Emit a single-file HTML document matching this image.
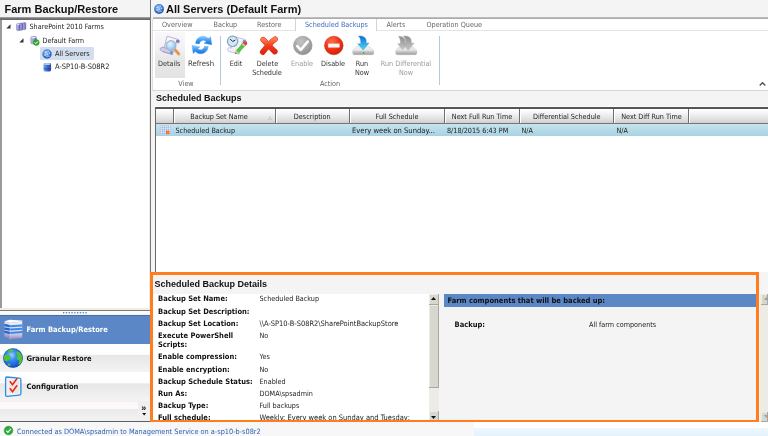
<!DOCTYPE html>
<html><head><meta charset="utf-8"><title>Farm Backup/Restore</title>
<style>
html,body{margin:0;padding:0;}
body{width:768px;height:436px;overflow:hidden;background:#f4f4f4;position:relative;font-family:"DejaVu Sans Condensed","Liberation Sans",sans-serif;font-size:7.2px;color:#222;}
.a{position:absolute;white-space:nowrap;}
.t{position:absolute;white-space:nowrap;line-height:10px;height:10px;margin-top:.8px;}
.c{text-align:center;}
.b{font-weight:bold;font-size:7.5px;color:#111;}
.h1{font-family:"Liberation Sans",sans-serif;position:absolute;white-space:nowrap;font-weight:bold;font-size:11px;line-height:14px;color:#111;}
.h2{font-family:"Liberation Sans",sans-serif;position:absolute;white-space:nowrap;font-weight:bold;font-size:9px;line-height:12px;color:#111;}
svg{position:absolute;overflow:visible;}
.sbt{background:#ecebe6;}
.sbb{background:#d7d6cf;box-shadow:inset -1px -1px 0 #a8a8a0,inset 1px 1px 0 #ecebe4;}
.vl{top:109px;width:1px;height:14px;background:#6e6e6e;box-shadow:1px 0 0 #fff;}
</style></head><body>
<div id="app" style="position:absolute;left:0;top:0;width:768px;height:436px;will-change:transform;">

<!-- LEFT PANE -->
<div class="h1" style="left:4.500px;top:2px;">Farm Backup/Restore</div>
<div class="a" style="left:0;top:17.400px;width:150px;height:2.400px;background:linear-gradient(#b0b0b0,#6f6f6f 55%,#686868);"></div>
<div class="a" style="left:0;top:20px;width:150px;height:288px;background:#fff;border-left:2px solid #9a9a9a;border-right:1.500px solid #efede6;box-sizing:border-box;"></div>
<div class="a" style="left:0;top:308px;width:150px;height:2px;background:#efede6;"></div>
<div class="a" style="left:0;top:310px;width:150px;height:1.300px;background:#7c7c7c;"></div>
<div class="a" style="left:149.600px;top:0;width:1.400px;height:422px;background:#787878;"></div>

<!-- tree -->
<svg style="left:6px;top:24px" width="5" height="5" viewBox="0 0 5 5"><path d="M4.5 0.3V4.5H0.3Z" fill="#333"/></svg>
<svg style="left:16px;top:22px" width="11" height="9" viewBox="0 0 11 9">
 <defs><linearGradient id="cy" x1="0" x2="1"><stop offset="0" stop-color="#c9c9ee"/><stop offset=".5" stop-color="#9a9ad6"/><stop offset="1" stop-color="#5a5aa8"/></linearGradient></defs>
 <rect x="6.6" y="0.6" width="3.2" height="7" rx="1.2" fill="url(#cy)" stroke="#5c5ca6" stroke-width=".5"/>
 <rect x="3.6" y="1" width="3.2" height="7.2" rx="1.2" fill="url(#cy)" stroke="#5c5ca6" stroke-width=".5"/>
 <rect x="0.6" y="1.4" width="3.4" height="7.2" rx="1.2" fill="url(#cy)" stroke="#5c5ca6" stroke-width=".5"/>
 <ellipse cx="2.3" cy="2.2" rx="1.5" ry=".7" fill="#e6e6fa"/>
</svg>
<div class="t" style="left:29.5px;top:21.5px;">SharePoint 2010 Farms</div>

<svg style="left:19px;top:37.5px" width="5" height="5" viewBox="0 0 5 5"><path d="M4.5 0.3V4.5H0.3Z" fill="#333"/></svg>
<svg style="left:30px;top:35.5px" width="10" height="10" viewBox="0 0 10 10">
 <rect x="0.8" y="0.6" width="5.6" height="7.2" rx="1.3" fill="url(#cy)" stroke="#6a6aa8" stroke-width=".5"/>
 <ellipse cx="3.6" cy="1.6" rx="2.4" ry=".8" fill="#e6e6fa"/>
 <circle cx="6.3" cy="6.5" r="2.9" fill="#2fae2f" stroke="#1d8a1d" stroke-width=".5"/>
 <path d="M4.8 6.5l1.1 1.2 2-2.3" stroke="#fff" stroke-width="1" fill="none"/>
</svg>
<div class="t" style="left:42.5px;top:35px;">Default Farm</div>

<div class="a" style="left:40px;top:47px;width:54px;height:13px;background:#d3dfee;border-radius:1px;"></div>
<svg style="left:42px;top:48.5px" width="10" height="10" viewBox="0 0 10 10">
 <defs><radialGradient id="gl" cx=".4" cy=".35" r=".7"><stop offset="0" stop-color="#8fc0f2"/><stop offset=".6" stop-color="#3a78d0"/><stop offset="1" stop-color="#1c4ea8"/></radialGradient></defs>
 <circle cx="5" cy="5" r="4.7" fill="url(#gl)"/>
 <path d="M2.500 3.200l1.500-.9 1 .8-1.300.9zM5.300 1.800l1.300-.3.600.9-1.200.4zM6.800 3.600l1.300.2.100 1.300-1.200-.3zM2 5.600l2-.3.600 1-1.700.6zM5.200 4.800l1 .2-.1 1.200-1-.3zM4.200 7.200l1.200.1.200 1-1.200-.1zM6.600 6.600l1.100.3-.5 1-1-.4z" fill="#e4efff" opacity=".85"/>
 <path d="M2.500 3.200L5 5l2.200-1.300M5 5L3 6M5 5l.5 2.800M5 5l2.200 2M5.800 2.300L5 5" stroke="#cfe0fa" stroke-width=".35" fill="none" opacity=".8"/>
</svg>
<div class="t" style="left:55px;top:48.500px;">All Servers</div>

<svg style="left:43px;top:62px" width="9" height="10" viewBox="0 0 9 10">
 <defs><linearGradient id="sv" x1="0" x2="1"><stop offset="0" stop-color="#6fa8ee"/><stop offset=".6" stop-color="#2c62c4"/><stop offset="1" stop-color="#4a3c9a"/></linearGradient></defs>
 <rect x=".5" y="1" width="7.6" height="8.4" rx="1.4" fill="url(#sv)"/>
 <ellipse cx="4.2" cy="2" rx="3.5" ry="1.100" fill="#a9cdf6"/>
 <path d="M.8 6.300c2 1 5 1 7 0" stroke="#173f94" stroke-width=".7" fill="none"/>
</svg>
<div class="t" style="left:55px;top:61.700px;font-size:7.45px;">A-SP10-B-S08R2</div>

<!-- nav -->
<div class="a" style="left:0;top:311.300px;width:150px;height:3.200px;background:#fbfbfb;"></div>
<div class="a" style="left:0;top:314.500px;width:150px;height:1.200px;background:#4a6da8;"></div>
<svg style="left:63.200px;top:311.800px" width="24" height="2" viewBox="0 0 24 2"><rect x="0.00" y="0" width="1.300" height="1.400" fill="#4f84d6"/><rect x="2.80" y="0" width="1.300" height="1.400" fill="#4f84d6"/><rect x="5.60" y="0" width="1.300" height="1.400" fill="#4f84d6"/><rect x="8.40" y="0" width="1.300" height="1.400" fill="#4f84d6"/><rect x="11.20" y="0" width="1.300" height="1.400" fill="#4f84d6"/><rect x="14.00" y="0" width="1.300" height="1.400" fill="#4f84d6"/><rect x="16.80" y="0" width="1.300" height="1.400" fill="#4f84d6"/><rect x="19.60" y="0" width="1.300" height="1.400" fill="#4f84d6"/><rect x="22.40" y="0" width="1.300" height="1.400" fill="#4f84d6"/></svg>
<div class="a" style="left:0;top:315.500px;width:150px;height:28px;background:#5b87c6;"></div>
<div class="a" style="left:0;top:343.5px;width:150px;height:28.500px;background:linear-gradient(#ffffff 0,#fefefe 37%,#e7e7e7 41%,#f4f4f4 100%);"></div>
<div class="a" style="left:0;top:372px;width:150px;height:28.500px;background:linear-gradient(#ffffff 0,#fefefe 37%,#e7e7e7 41%,#f4f4f4 100%);box-sizing:border-box;"></div>
<div class="a" style="left:0;top:400.5px;width:150px;height:20px;background:#f0f0f0;"></div>
<div class="a" style="left:0;top:401.500px;width:138px;height:19px;background:linear-gradient(#fbf6f9 0,#fdfafc 34%,#ebebeb 40%,#f2f2f2 100%);"></div>
<!-- nav icons -->
<svg style="left:3.500px;top:319px" width="19" height="21" viewBox="0 0 19 21">
 <defs>
  <linearGradient id="fb1" x1="0" x2="0" y1="0" y2="1"><stop offset="0" stop-color="#f2f2f6"/><stop offset=".25" stop-color="#e2e2ec"/><stop offset=".7" stop-color="#cfcbe2"/><stop offset=".85" stop-color="#b0a8d0"/><stop offset="1" stop-color="#8a82b6"/></linearGradient>
  <linearGradient id="fb2" x1="0" x2="0" y1="0" y2="1"><stop offset="0" stop-color="#e4e4ee"/><stop offset=".7" stop-color="#b8b2d4"/><stop offset="1" stop-color="#7a72aa"/></linearGradient>
 </defs>
 <path d="M.5 2.300L6 4V20.500L.5 17.400z" fill="url(#fb2)"/>
 <path d="M6 4L18.200 2.600V18.800L6 20.500z" fill="url(#fb1)"/>
 <path d="M.5 2.300L5.500 .8 18.200 1.400v1.200L6 4z" fill="#fafafc"/>
 <path d="M.5 5.1L6 6.3L18.200 5.5v2L6 8.3L.5 7.1zM.5 8.4L6 9.6L18.200 8.8v2L6 11.6L.5 10.4zM.5 11.7L6 12.9L18.200 12.1v2L6 14.9L.5 13.7z" fill="#3a8cec"/>
 <path d="M.5 5.1L6 6.3v2L.5 7.1zM.5 8.4L6 9.6v2L.5 10.4zM.5 11.7L6 12.9v2L.5 13.7z" fill="#2264cc"/>
 <path d="M6 4V20.500" stroke="#f4f4fa" stroke-width=".4" opacity=".7"/>
</svg>
<svg style="left:2.900px;top:347.800px" width="20" height="20" viewBox="0 0 20 20">
 <defs><radialGradient id="eg" cx=".42" cy=".35" r=".68"><stop offset="0" stop-color="#9fd0ff"/><stop offset=".35" stop-color="#3f8ff0"/><stop offset=".8" stop-color="#1a5fd6"/><stop offset="1" stop-color="#1846a8"/></radialGradient>
 <clipPath id="ec"><circle cx="10" cy="10" r="9.700"/></clipPath></defs>
 <circle cx="10" cy="10" r="9.800" fill="url(#eg)"/>
 <g clip-path="url(#ec)" fill="#4fc43a">
  <path d="M1 7.500c1.500-1 4-1.300 5.800-.3 1.400 1 1 3.300-.3 4.600-1.200 1.100-2.600 1.700-4.200 1.300C.8 12.600-.2 9 1 7.500z"/>
  <path d="M5.500 1.800c1.600-1 3.600-1 4.500.2.400 1.200-.7 2.300-2 2.500-1.200 0-2.600-.6-2.900-1.500z"/>
  <path d="M13.500 3.800c1.200-.7 3 .2 4.300 1.700 1.500 2 2.200 4.500 1.800 7-.5 2.800-2 4.600-3.400 4.300-1.100-.4-.7-2-.1-3.100.6-1.200-.2-1.700-1.100-1.800-1.300-.2-1.700-1.700-.8-2.800.8-.8.700-1.700-.1-2.500-.9-.9-1.400-2.200-.6-2.800z"/>
  <path d="M4.600 16c.9-.8 2.300-.5 2.900.5.300 1-.5 1.600-1.500 1.400-.9-.3-1.700-1.200-1.400-1.900z"/>
 </g>
 <circle cx="10" cy="10" r="9.500" fill="none" stroke="#1a3f9a" stroke-width=".6" opacity=".6"/>
</svg>
<svg style="left:4.500px;top:376px" width="17" height="21" viewBox="0 0 17 21">
 <path d="M1.700 1L14.500 2.200c.9.100 1.400.6 1.400 1.500V17.600c0 .9-.5 1.400-1.400 1.500L1.700 20.300c-.7 0-1.100-.4-1.100-1.100V2.100c0-.7.400-1.100 1.100-1.100z" fill="#f2f0ee" stroke="#2e8de8" stroke-width="1.300"/>
 <path d="M4.300 4h9.500v13H4.300z" fill="#e6e2e0" opacity=".7"/>
 <path d="M5.200 5.700l2.300 3 4.300-6" stroke="#e8241a" stroke-width="1.500" fill="none" stroke-linecap="round"/>
 <path d="M5.200 12.700l2.300 3 4.300-6" stroke="#e8241a" stroke-width="1.500" fill="none" stroke-linecap="round"/>
</svg>
<div class="t b" style="left:26.500px;top:324.500px;color:#fff;">Farm Backup/Restore</div>
<div class="t b" style="left:26.500px;top:353px;">Granular Restore</div>
<div class="t b" style="left:26.500px;top:381.500px;">Configuration</div>
<div class="t" style="left:141.300px;top:402.300px;font-family:'Liberation Sans',sans-serif;font-size:9px;font-weight:bold;color:#111;">»</div>
<svg style="left:142.300px;top:413px" width="4.400" height="2.400" viewBox="0 0 5 3"><path d="M0 0h5L2.500 3z" fill="#111"/></svg>

<!-- RIGHT -->
<svg style="left:153.800px;top:3.800px" width="10" height="10" viewBox="0 0 10 10">
 <circle cx="5" cy="5" r="4.900" fill="url(#gl)"/>
 <path d="M2.500 3.200l1.500-.9 1 .8-1.300.9zM5.300 1.800l1.300-.3.600.9-1.200.4zM6.800 3.600l1.300.2.100 1.300-1.200-.3zM2 5.600l2-.3.600 1-1.700.6zM5.200 4.800l1 .2-.1 1.200-1-.3zM4.200 7.200l1.200.1.200 1-1.200-.1zM6.600 6.600l1.100.3-.5 1-1-.4z" fill="#e4efff" opacity=".85"/>
 <path d="M2.500 3.200L5 5l2.200-1.300M5 5L3 6M5 5l.5 2.800M5 5l2.200 2M5.800 2.300L5 5" stroke="#cfe0fa" stroke-width=".35" fill="none" opacity=".8"/>
</svg>
<div class="h1" style="left:166px;top:2px;">All Servers (Default Farm)</div>
<div class="a" style="left:152.500px;top:17px;width:616px;height:1.700px;background:linear-gradient(#c4c4c4,#a4a4a4);"></div>
<!-- tab strip -->
<div class="a" style="left:152.500px;top:18.700px;width:616px;height:12px;background:#fff;"></div>
<div class="a" style="left:152.500px;top:30px;width:616px;height:1px;background:#e4e4e4;"></div>
<div class="a" style="left:294.500px;top:18.700px;width:82.200px;height:12.300px;background:#fff;border-left:1px solid #d4d4d4;border-right:1px solid #d4d4d4;box-sizing:border-box;"></div>
<div class="t" style="left:162px;top:19.500px;color:#666;">Overview</div>
<div class="t" style="left:213.500px;top:19.500px;color:#666;">Backup</div>
<div class="t" style="left:257px;top:19.500px;color:#666;">Restore</div>
<div class="t" style="left:305px;top:19.500px;color:#3c6dba;">Scheduled Backups</div>
<div class="t" style="left:386.500px;top:19.500px;color:#666;">Alerts</div>
<div class="t" style="left:426.500px;top:19.500px;color:#666;">Operation Queue</div>
<!-- ribbon -->
<div class="a" style="left:152.500px;top:31px;width:616px;height:59px;background:#fff;"></div>
<div class="a" style="left:152.500px;top:90px;width:616px;height:1px;background:#d6d6d6;"></div>
<div class="a" style="left:152px;top:18.700px;width:1px;height:72px;background:#dedede;"></div>
<div class="a" style="left:155px;top:32px;width:30px;height:46px;background:linear-gradient(#f9f7f9 0,#f1eff1 42%,#e8e8e8 58%,#e3e3e3 100%);"></div>
<div class="a" style="left:220px;top:36px;width:1px;height:49px;background:#b4c7e4;"></div>
<div class="a" style="left:438.500px;top:36px;width:1px;height:49px;background:#b4c7e4;"></div>
<!--ICONS-->
<svg width="0" height="0" style="left:0;top:0"><defs>
 <linearGradient id="pap" x1="0" x2="1" y1="0" y2="1"><stop offset="0" stop-color="#ffffff"/><stop offset="1" stop-color="#e4e4f4"/></linearGradient>
 <radialGradient id="lens" cx=".4" cy=".35" r=".7"><stop offset="0" stop-color="#e8f6ff"/><stop offset=".6" stop-color="#a8d4f4"/><stop offset="1" stop-color="#7ab4e6"/></radialGradient>
 <linearGradient id="blu" x1="0" x2="0" y1="0" y2="1"><stop offset="0" stop-color="#8fd2ff"/><stop offset=".45" stop-color="#3e9cf4"/><stop offset="1" stop-color="#1f6cdc"/></linearGradient>
 <linearGradient id="redx" x1="0" x2="0" y1="0" y2="1"><stop offset="0" stop-color="#ff7a50"/><stop offset=".5" stop-color="#f53c1c"/><stop offset="1" stop-color="#e02a10"/></linearGradient>
 <radialGradient id="gry" cx=".4" cy=".3" r=".8"><stop offset="0" stop-color="#c4c4c4"/><stop offset=".6" stop-color="#a2a2a2"/><stop offset="1" stop-color="#8a8a8a"/></radialGradient>
 <radialGradient id="redc" cx=".4" cy=".3" r=".8"><stop offset="0" stop-color="#ff7048"/><stop offset=".55" stop-color="#f2300e"/><stop offset="1" stop-color="#c41c08"/></radialGradient>
 <linearGradient id="drv" x1="0" x2="0" y1="0" y2="1"><stop offset="0" stop-color="#f0f0f0"/><stop offset=".55" stop-color="#d2d2d2"/><stop offset="1" stop-color="#9c9c9c"/></linearGradient>
 <linearGradient id="cyn" x1="0" x2="0" y1="0" y2="1"><stop offset="0" stop-color="#1a66d0"/><stop offset=".5" stop-color="#2aa4ea"/><stop offset="1" stop-color="#4fe0e6"/></linearGradient>
 <linearGradient id="gar" x1="0" x2="0" y1="0" y2="1"><stop offset="0" stop-color="#8e8e8e"/><stop offset="1" stop-color="#c8c8c8"/></linearGradient>
</defs></svg>
<!-- details -->
<svg style="left:158.500px;top:34.500px" width="22" height="22" viewBox="0 0 22 22">
 <path d="M8.200 1.200L18.500 4.300c1.500.5 2.300 1.500 2 2.600-.3 1-1.300 1.400-2.500 1.100l-1.300-.4-3.200 12-9.500-2.700z" fill="url(#pap)" stroke="#9a96d0" stroke-width=".7" stroke-linejoin="round"/>
 <path d="M1.200 13.800c.4-1.300 1.600-1.900 3-1.500l9.300 2.700c-1.200 0-2 .7-2.200 1.700-.2 1.100.5 2.100 2 2.600l-9.700-2.800c-1.800-.6-2.700-1.600-2.400-2.700z" fill="#cfcdea" stroke="#8f8ac8" stroke-width=".7"/>
 <ellipse cx="18.700" cy="6.200" rx="1.700" ry="1.600" fill="#7f7ac2"/>
 <ellipse cx="12.500" cy="17.400" rx="1.500" ry="1.700" fill="#8f8ac8"/>
 <path d="M15.600 14.400l4.200 4.600" stroke="#c8c8c8" stroke-width="3.400" stroke-linecap="round"/>
 <path d="M16 14.800l3.600 4" stroke="#ff8a1a" stroke-width="2.100" stroke-linecap="round"/>
 <circle cx="12" cy="10.600" r="4.900" fill="url(#lens)" stroke="#aab8c8" stroke-width="1.300"/>
</svg>
<!-- refresh -->
<svg style="left:190.500px;top:34.500px" width="22" height="21" viewBox="0 0 22 21">
 <path d="M4.600 8.600C4.800 4.200 8.600 1 12.800 1.400c1.900.2 3.400 1 4.600 2.200L19.600 1.800l1.200 8-7.800-1.500 2.200-1.900c-1.300-1.200-3.700-1.500-5.300-.1-.9.700-1.300 1.500-1.500 2.600z" fill="url(#blu)" stroke="#3a8ae8" stroke-width=".35"/>
 <path d="M17.200 11.600c-.2 4.400-4 7.600-8.200 7.200-1.900-.2-3.400-1-4.600-2.200L2.200 18.400 1 10.400l7.800 1.500-2.200 1.900c1.300 1.200 3.700 1.500 5.300.1.900-.7 1.300-1.500 1.500-2.600z" fill="url(#blu)" stroke="#3a8ae8" stroke-width=".35"/>
</svg>
<!-- edit -->
<svg style="left:225.500px;top:34.500px" width="22" height="21" viewBox="0 0 22 21">
 <path d="M8 1.600L18.300 4.300c1.400.4 2.200 1.400 2 2.500-.2 1-1.100 1.500-2.300 1.300l-1.800-.5-3 11.600-9.800-2.600c-1.400-.5-2.100-1.500-1.900-2.600.3-1 1.100-1.400 2.300-1.200l1.400.4z" fill="url(#pap)" stroke="#a9a6d6" stroke-width=".7" stroke-linejoin="round"/>
 <ellipse cx="18.400" cy="6.300" rx="1.700" ry="1.500" fill="#8c88c8"/>
 <circle cx="6.600" cy="6.300" r="5.200" fill="#cfe8fa" stroke="#8aa2bc" stroke-width="1.200"/>
 <path d="M4.200 4l2.500 2.500 2.600-1.500" stroke="#2a2a2a" stroke-width="1" fill="none"/>
 <path d="M9.300 18.800l1-3.400L17.500 7.600l2.500 2.200-7.300 7.900z" fill="#4fc83c" stroke="#3a9a2a" stroke-width=".4"/>
 <path d="M9.300 18.800l1-3.400 2.400 2.300z" fill="#e8c89a"/>
 <path d="M9.300 18.800l.4-1.300.9.900z" fill="#444"/>
 <path d="M16.400 8.800l1.600-1.700c.8-.8 2-.8 2.700 0 .7.700.7 1.800 0 2.500l-1.700 1.600z" fill="#ee3a2a"/>
 <path d="M16 9.200l.9-.9 2.600 2.300-.9 1z" fill="#d8d8d8"/>
</svg>
<!-- delete -->
<svg style="left:258.500px;top:35.500px" width="20" height="20" viewBox="0 0 20 20">
 <path d="M4.200 3.800C7 6.500 12 12 15.800 15.600" stroke="#cf2c10" stroke-width="5.600" stroke-linecap="round" fill="none"/>
 <path d="M16 3.200C12 6 6.500 12.500 3.800 16" stroke="#cf2c10" stroke-width="5.600" stroke-linecap="round" fill="none"/>
 <path d="M4.200 3.800C7 6.500 12 12 15.800 15.600" stroke="url(#redx)" stroke-width="4.800" stroke-linecap="round" fill="none"/>
 <path d="M16 3.200C12 6 6.500 12.500 3.800 16" stroke="url(#redx)" stroke-width="4.800" stroke-linecap="round" fill="none"/>
</svg>
<!-- enable -->
<svg style="left:292.500px;top:36px" width="20" height="20" viewBox="0 0 20 20">
 <circle cx="9.800" cy="9.500" r="9.300" fill="url(#gry)" stroke="#8c8c8c" stroke-width=".5"/>
 <path d="M4.300 10.200l3.400 3.700 7-8.300" stroke="#fff" stroke-width="2.600" fill="none" stroke-linecap="round" stroke-linejoin="round"/>
</svg>
<!-- disable -->
<svg style="left:323.700px;top:36px" width="20" height="20" viewBox="0 0 20 20">
 <circle cx="9.800" cy="9.500" r="9.300" fill="url(#redc)" stroke="#b82010" stroke-width=".5"/>
 <rect x="4.200" y="7.800" width="11.300" height="3.600" fill="#f4f6f8" stroke="#e8d0cc" stroke-width=".4"/>
</svg>
<!-- run now -->
<svg style="left:351.500px;top:34.500px" width="23" height="22" viewBox="0 0 23 22">
 <path d="M.8 15.500L5 11.200h12l4.800 4.300v2.800c0 .9-.6 1.400-1.500 1.400H2.300c-.9 0-1.500-.5-1.500-1.400z" fill="url(#drv)" stroke="#b4b4b4" stroke-width=".4"/>
 <path d="M.8 15.500L5 11.200h12l4.800 4.300z" fill="#ececec"/>
 <rect x="11" y="17" width="1.200" height="1.500" fill="#5a9a3a"/>
 <path d="M6.500 1c3.500-.5 6.800.8 7.500 3.500.3 1.200.3 2.500.2 3.800l2.800-.2-5.800 7-5.500-6.300 3 .1c.3-3-.2-6-2.200-7.900z" fill="url(#cyn)" stroke="#2a8ad8" stroke-width=".4"/>
</svg>
<!-- run diff -->
<svg style="left:394.800px;top:34.500px" width="23" height="22" viewBox="0 0 23 22">
 <path d="M.8 15.500L5 11.200h12l4.800 4.300v2.800c0 .9-.6 1.400-1.500 1.400H2.300c-.9 0-1.500-.5-1.500-1.400z" fill="url(#drv)" stroke="#b4b4b4" stroke-width=".4"/>
 <path d="M.8 15.500L5 11.200h12l4.800 4.300z" fill="#e6e6e6"/>
 <path d="M3.500 1.500c3-.5 5.800.8 6.400 3.300.3 1.100.3 2.300.2 3.500l2.400-.2-5 6.400-4.700-5.800 2.600.1c.3-2.800-.2-5.500-1.900-7.300z" fill="url(#gar)" stroke="#9a9a9a" stroke-width=".4"/>
 <path d="M8.500 1c3.500-.5 6.800.8 7.500 3.500.3 1.200.3 2.500.2 3.800l2.800-.2-5.800 7-5.500-6.300 3 .1c.3-3-.2-6-2.200-7.900z" fill="url(#gar)" stroke="#9a9a9a" stroke-width=".4"/>
</svg>
<div class="t c" style="left:149.200px;width:40px;top:58px;color:#333;">Details</div>
<div class="t c" style="left:181px;width:40px;top:58px;color:#333;font-size:7.700px;">Refresh</div>
<div class="t c" style="left:216px;width:40px;top:58px;color:#333;">Edit</div>
<div class="t c" style="left:247.500px;width:40px;top:58px;color:#333;">Delete</div>
<div class="t c" style="left:247px;width:40px;top:67px;color:#333;">Schedule</div>
<div class="t c" style="left:282px;width:40px;top:58px;color:#9a9a9a;">Enable</div>
<div class="t c" style="left:313px;width:40px;top:58px;color:#333;">Disable</div>
<div class="t c" style="left:342px;width:40px;top:58px;color:#333;">Run</div>
<div class="t c" style="left:342px;width:40px;top:67px;color:#333;">Now</div>
<div class="t c" style="left:376px;width:60px;top:58px;color:#9a9a9a;">Run Differential</div>
<div class="t c" style="left:376px;width:60px;top:67px;color:#9a9a9a;">Now</div>
<div class="t c" style="left:166px;width:40px;top:78px;color:#666;">View</div>
<div class="t c" style="left:310px;width:40px;top:78px;color:#666;">Action</div>
<svg style="left:759px;top:82px" width="7" height="4" viewBox="0 0 7 4"><path d="M.7 3.500l2.800-2.800 2.800 2.800" stroke="#505050" stroke-width="1.350" fill="none"/></svg>

<div class="h2" style="left:156px;top:92px;">Scheduled Backups</div>
<!-- table -->
<div class="a" style="left:154px;top:105.800px;width:620px;height:1.100px;background:#fcfcfc;"></div>
<div class="a" style="left:155px;top:106.800px;width:620px;height:165.200px;background:#fff;border:1px solid #6a6a6a;border-bottom:none;border-top:2.100px solid #555;box-sizing:border-box;"></div>
<div class="a" style="left:156px;top:108.500px;width:612px;height:15px;background:linear-gradient(#ffffff 0,#f6f6f6 25%,#ebebeb 50%,#dbdbdb 82%,#cfcfcf 100%);border-bottom:1.200px solid #757575;box-sizing:border-box;"></div>
<div class="a" style="left:156px;top:123.500px;width:612px;height:12.500px;background:linear-gradient(#c9e3ee 0,#b4d9e6 60%,#a7d2e2 100%);"></div>
<div class="a vl" style="left:172.900px;"></div><div class="a vl" style="left:274.800px;"></div><div class="a vl" style="left:349.300px;"></div><div class="a vl" style="left:444.300px;"></div><div class="a vl" style="left:519.300px;"></div><div class="a vl" style="left:613.300px;"></div><div class="a vl" style="left:688.200px;"></div>
<div class="t c" style="left:174px;width:90px;top:111.300px;">Backup Set Name</div>
<svg style="left:267.500px;top:115.500px" width="4" height="4" viewBox="0 0 4 4"><path d="M.3 3.700L2 .5l1.700 3.200z" fill="none" stroke="#b4b4b4" stroke-width=".5"/></svg>
<div class="t c" style="left:275px;width:74.500px;top:111.300px;">Description</div>
<div class="t c" style="left:349.500px;width:95px;top:111.300px;">Full Schedule</div>
<div class="t c" style="left:444.500px;width:75px;top:111.300px;">Next Full Run Time</div>
<div class="t c" style="left:519.500px;width:94.500px;top:111.300px;">Differential Schedule</div>
<div class="t c" style="left:614px;width:75px;top:111.300px;">Next Diff Run Time</div>
<svg style="left:159.500px;top:125px" width="11" height="10" viewBox="0 0 11 10">
 <rect x=".3" y=".3" width="10.200" height="9.400" fill="#fff" stroke="#b4c2da" stroke-width=".6"/>
 <path d="M2.300 .5v9M4.300 .5v9M6.300 .5v9M8.300 .5v9M.5 2.300h10M.5 4.300h10M.5 6.300h10M.5 8.300h10" stroke="#8fb0e8" stroke-width=".7"/>
 <rect x="6.300" y="6" width="2.800" height="2.800" fill="#f08a3c" stroke="#e05a14" stroke-width=".5"/>
</svg>
<div class="t" style="left:175.500px;top:125.300px;">Scheduled Backup</div>
<div class="t" style="left:352px;top:125.300px;font-size:7.550px;">Every week on Sunday...</div>
<div class="t" style="left:447px;top:125.300px;">8/18/2015 6:43 PM</div>
<div class="t" style="left:521.500px;top:125.300px;">N/A</div>
<div class="t" style="left:616.500px;top:125.300px;">N/A</div>
<!--DETAILS-->
<div class="a" style="left:150px;top:272px;width:609px;height:151px;background:#f4f4f4;"></div>
<div class="h2" style="left:154.500px;top:278px;">Scheduled Backup Details</div>
<div class="a" style="left:153px;top:294px;width:276px;height:126px;background:#fff;overflow:hidden;">
<div class="t b" style="left:5px;top:-0.45px;">Backup Set Name:</div><div class="t" style="left:106.500px;top:-0.45px;">Scheduled Backup</div>
<div class="t b" style="left:5px;top:11.80px;">Backup Set Description:</div>
<div class="t b" style="left:5px;top:24.05px;">Backup Set Location:</div><div class="t" style="left:106.500px;top:24.05px;font-size:7.43px;">\\A-SP10-B-S08R2\SharePointBackupStore</div>
<div class="t b" style="left:5px;top:36.30px;">Execute PowerShell</div><div class="t" style="left:106.500px;top:36.30px;">No</div>
<div class="t b" style="left:5px;top:45.30px;">Scripts:</div>
<div class="t b" style="left:5px;top:57.55px;">Enable compression:</div><div class="t" style="left:106.500px;top:57.55px;">Yes</div>
<div class="t b" style="left:5px;top:69.80px;">Enable encryption:</div><div class="t" style="left:106.500px;top:69.80px;">No</div>
<div class="t b" style="left:5px;top:81.80px;">Backup Schedule Status:</div><div class="t" style="left:106.500px;top:81.80px;">Enabled</div>
<div class="t b" style="left:5px;top:94.05px;">Run As:</div><div class="t" style="left:106.500px;top:94.05px;">DOMA\spsadmin</div>
<div class="t b" style="left:5px;top:106.30px;">Backup Type:</div><div class="t" style="left:106.500px;top:106.30px;">Full backups</div>
<div class="t b" style="left:5px;top:118.55px;">Full schedule:</div><div class="t" style="left:106.500px;top:118.55px;font-size:7.45px;">Weekly: Every week on Sunday and Tuesday;</div>
</div>
<!-- scrollbar -->
<div class="a sbt" style="left:429px;top:294px;width:10px;height:126px;"></div>
<div class="a sbb" style="left:429px;top:294px;width:10px;height:10.500px;"></div>
<svg style="left:431.300px;top:297.300px" width="5" height="3" viewBox="0 0 5 3"><path d="M0 3h5L2.500 0z" fill="#111"/></svg>
<div class="a sbb" style="left:429px;top:304.500px;width:10px;height:83.500px;"></div>
<div class="a sbb" style="left:429px;top:411.300px;width:10px;height:10px;"></div>
<svg style="left:431.300px;top:415.500px" width="5" height="3" viewBox="0 0 5 3"><path d="M0 0h5L2.500 3z" fill="#111"/></svg>
<!-- right panel -->
<div class="a" style="left:444px;top:294px;width:312px;height:12.500px;background:#5b87c6;"></div>
<div class="t b" style="left:447.500px;top:295.600px;">Farm components that will be backed up:</div>
<div class="t b" style="left:454.500px;top:319.200px;">Backup:</div>
<div class="t" style="left:589px;top:319.200px;">All farm components</div>
<!-- far right scrollbar -->
<div class="a" style="left:759px;top:272px;width:9px;height:150px;background:#f5f5f5;"></div>
<div class="a sbt" style="left:759.500px;top:294px;width:9px;height:127px;"></div>
<div class="a sbb" style="left:761px;top:294px;width:7px;height:10.500px;"></div>
<svg style="left:763.500px;top:297.300px" width="5" height="3" viewBox="0 0 5 3"><path d="M0 3h5L2.500 0z" fill="#a0a0a0"/></svg>
<div class="a sbb" style="left:761px;top:412px;width:7px;height:9.500px;"></div>
<svg style="left:763.500px;top:415.300px" width="5" height="3" viewBox="0 0 5 3"><path d="M0 0h5L2.500 3z" fill="#a0a0a0"/></svg>

<div class="a" style="left:149.800px;top:272px;width:609.200px;height:151.100px;border:3.100px solid #ff7d1c;border-bottom-width:3.800px;box-sizing:border-box;"></div>
<!-- status -->
<div class="a" style="left:0;top:420.500px;width:150px;height:1px;background:#5f5f5f;"></div>
<div class="a" style="left:0;top:421.500px;width:768px;height:15px;background:#f7f7f7;"></div>
<div class="a" style="left:474px;top:422px;width:294px;height:5.500px;background:#ffffff;"></div>
<div class="a" style="left:474px;top:427.500px;width:294px;height:9px;background:linear-gradient(#eef7fd,#e3f1fb);"></div>
<svg style="left:3.800px;top:426.100px" width="9" height="9" viewBox="0 0 9 9"><circle cx="4.500" cy="4.500" r="4.300" fill="#2eab37" stroke="#1b8424" stroke-width=".5"/><path d="M2.300 4.600l1.600 1.700 2.900-3.400" stroke="#fff" stroke-width="1.200" fill="none"/></svg>
<div class="t" style="left:17px;top:426.300px;color:#2b5fb4;font-size:7.3px;">Connected as DOMA\spsadmin to Management Service on a-sp10-b-s08r2</div>

</div>
</body></html>
